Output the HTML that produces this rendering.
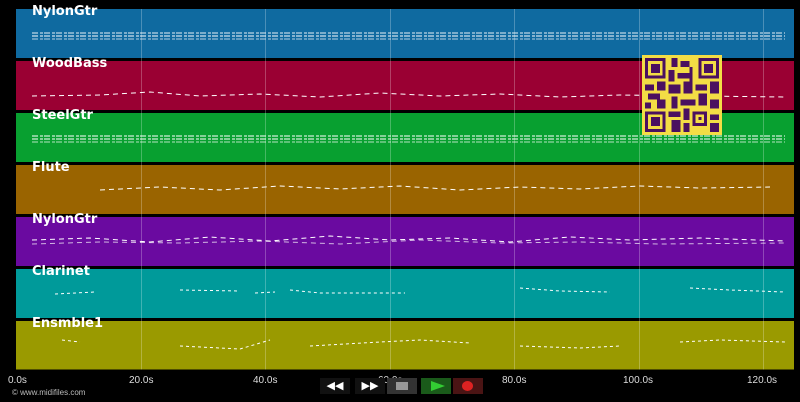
<!DOCTYPE html>
<html><head><style>
body{margin:0;width:800px;height:402px;background:#000;position:relative;overflow:hidden;font-family:"DejaVu Sans","Liberation Sans",sans-serif}
.lane{position:absolute;left:16px;width:778px;height:49px}
.lane span{position:absolute;left:16px;top:-5px;color:#fff;font-weight:bold;font-size:13px}
.grid{position:absolute;top:9px;height:361px;width:1px;background:rgba(255,255,255,0.25)}
.t{position:absolute;top:375px;color:#ddd;font-size:10px;font-family:"Liberation Sans",sans-serif}
.btn{position:absolute;top:378px;height:16px;width:30px;background:#1a1a1a}
</style></head><body>
<div class="lane" style="top:9px;background:#0f6aa0"><span>NylonGtr</span></div>
<div class="lane" style="top:61px;background:#9a0033"><span>WoodBass</span></div>
<div class="lane" style="top:113px;background:#08a030"><span>SteelGtr</span></div>
<div class="lane" style="top:165px;background:#9a6400"><span>Flute</span></div>
<div class="lane" style="top:217px;background:#6a0aa0"><span>NylonGtr</span></div>
<div class="lane" style="top:269px;background:#009a9a"><span>Clarinet</span></div>
<div class="lane" style="top:321px;background:#9a9a00"><span>Ensmble1</span></div>
<div class="grid" style="left:141px"></div><div class="grid" style="left:265px"></div><div class="grid" style="left:390px"></div><div class="grid" style="left:514px"></div><div class="grid" style="left:639px"></div><div class="grid" style="left:763px"></div>
<svg width="800" height="402" style="position:absolute;left:0;top:0" fill="none" stroke="#fff" stroke-width="1">
<g stroke-dasharray="6 2 3 1">
<line x1="32" y1="33" x2="785" y2="33" stroke-opacity=".9"/><line x1="32" y1="36" x2="785" y2="36"/><line x1="32" y1="39" x2="785" y2="39" stroke-opacity=".7"/>
<line x1="32" y1="136" x2="785" y2="136"/><line x1="32" y1="139" x2="785" y2="139"/><line x1="32" y1="142" x2="785" y2="142" stroke-opacity=".7"/>
</g>
<g stroke-dasharray="5 4">
<polyline points="32,96 100,95 150,92 200,96 260,94 320,97 380,93 440,96 500,94 560,97 620,95 700,96 785,97"/>
<polyline points="100,190 160,187 220,190 280,186 340,189 400,186 460,190 520,187 580,189 640,186 700,188 770,187"/>
<polyline points="32,240 90,238 150,242 210,237 270,241 330,236 390,240 450,238 510,242 570,237 630,240 700,238 785,241"/>
<polyline points="32,244 100,242 180,243 260,241 340,244 420,240 500,243 580,242 660,244 785,243" stroke-opacity=".7"/>
</g>
<g stroke-dasharray="3 3">
<polyline points="55,294 95,292"/><polyline points="180,290 240,291"/><polyline points="255,293 275,292"/><polyline points="290,290 320,293 405,293"/><polyline points="520,288 560,291 610,292"/><polyline points="690,288 730,290 785,292"/>
<polyline points="62,340 80,342"/><polyline points="180,346 240,349 270,340"/><polyline points="310,346 380,342 420,340 470,343"/><polyline points="520,346 580,348 620,346"/><polyline points="680,342 720,340 785,342"/>
</g>
<line x1="16" y1="370" x2="794" y2="370" stroke="#000"/>
</svg>
<svg style="position:absolute;left:642px;top:55px" width="80" height="80" viewBox="0 0 27 27" shape-rendering="crispEdges">
<rect width="27" height="27" fill="#f3dd45"/>
<g fill="#4a1060">
<rect x="1" y="1" width="7" height="7"/><rect x="19" y="1" width="7" height="7"/><rect x="1" y="19" width="7" height="7"/>
<rect x="10" y="1" width="2" height="3"/><rect x="13" y="2" width="3" height="2"/><rect x="9" y="5" width="2" height="4"/><rect x="12" y="6" width="4" height="2"/><rect x="16" y="4" width="1" height="5"/>
<rect x="1" y="10" width="3" height="2"/><rect x="5" y="9" width="3" height="3"/><rect x="2" y="13" width="4" height="2"/><rect x="1" y="16" width="2" height="2"/><rect x="5" y="15" width="3" height="3"/>
<rect x="9" y="10" width="4" height="3"/><rect x="14" y="9" width="3" height="4"/><rect x="18" y="10" width="4" height="2"/><rect x="23" y="9" width="3" height="4"/>
<rect x="10" y="14" width="2" height="4"/><rect x="13" y="15" width="5" height="2"/><rect x="19" y="13" width="3" height="4"/><rect x="23" y="15" width="3" height="3"/>
<rect x="9" y="19" width="4" height="2"/><rect x="14" y="18" width="2" height="4"/><rect x="17" y="19" width="5" height="5"/><rect x="23" y="20" width="3" height="2"/>
<rect x="10" y="22" width="3" height="4"/><rect x="14" y="23" width="2" height="3"/><rect x="23" y="23" width="3" height="3"/>
</g>
<g fill="#f3dd45"><rect x="2" y="2" width="5" height="5"/><rect x="20" y="2" width="5" height="5"/><rect x="2" y="20" width="5" height="5"/><rect x="18" y="20" width="3" height="3"/></g>
<g fill="#4a1060"><rect x="3" y="3" width="3" height="3"/><rect x="21" y="3" width="3" height="3"/><rect x="3" y="21" width="3" height="3"/><rect x="19" y="21" width="1" height="1"/></g>
</svg>
<div class="t" style="left:8px">0.0s</div><div class="t" style="left:129px">20.0s</div><div class="t" style="left:253px">40.0s</div><div class="t" style="left:378px">60.0s</div><div class="t" style="left:502px">80.0s</div><div class="t" style="left:623px">100.0s</div><div class="t" style="left:747px">120.0s</div>
<div style="position:absolute;left:12px;top:388px;color:#bbb;font-size:8px;font-family:'Liberation Sans',sans-serif">© www.midifiles.com</div>
<div class="btn" style="left:320px;background:#111;color:#fff;font-size:11px;text-align:center;line-height:16px">◀◀</div>
<div class="btn" style="left:355px;background:#111;color:#fff;font-size:11px;text-align:center;line-height:16px">▶▶</div>
<div class="btn" style="left:387px;background:#333"><div style="margin:4px 0 0 9px;width:12px;height:8px;background:#999"></div></div>
<div class="btn" style="left:421px;background:#1a5a1a"><div style="margin:3px 0 0 10px;width:0;height:0;border-left:14px solid #3c3;border-top:5px solid transparent;border-bottom:5px solid transparent"></div></div>
<div class="btn" style="left:453px;background:#4a1414"><div style="margin:3px 0 0 9px;width:11px;height:10px;border-radius:50%;background:#d22"></div></div>
</body></html>
